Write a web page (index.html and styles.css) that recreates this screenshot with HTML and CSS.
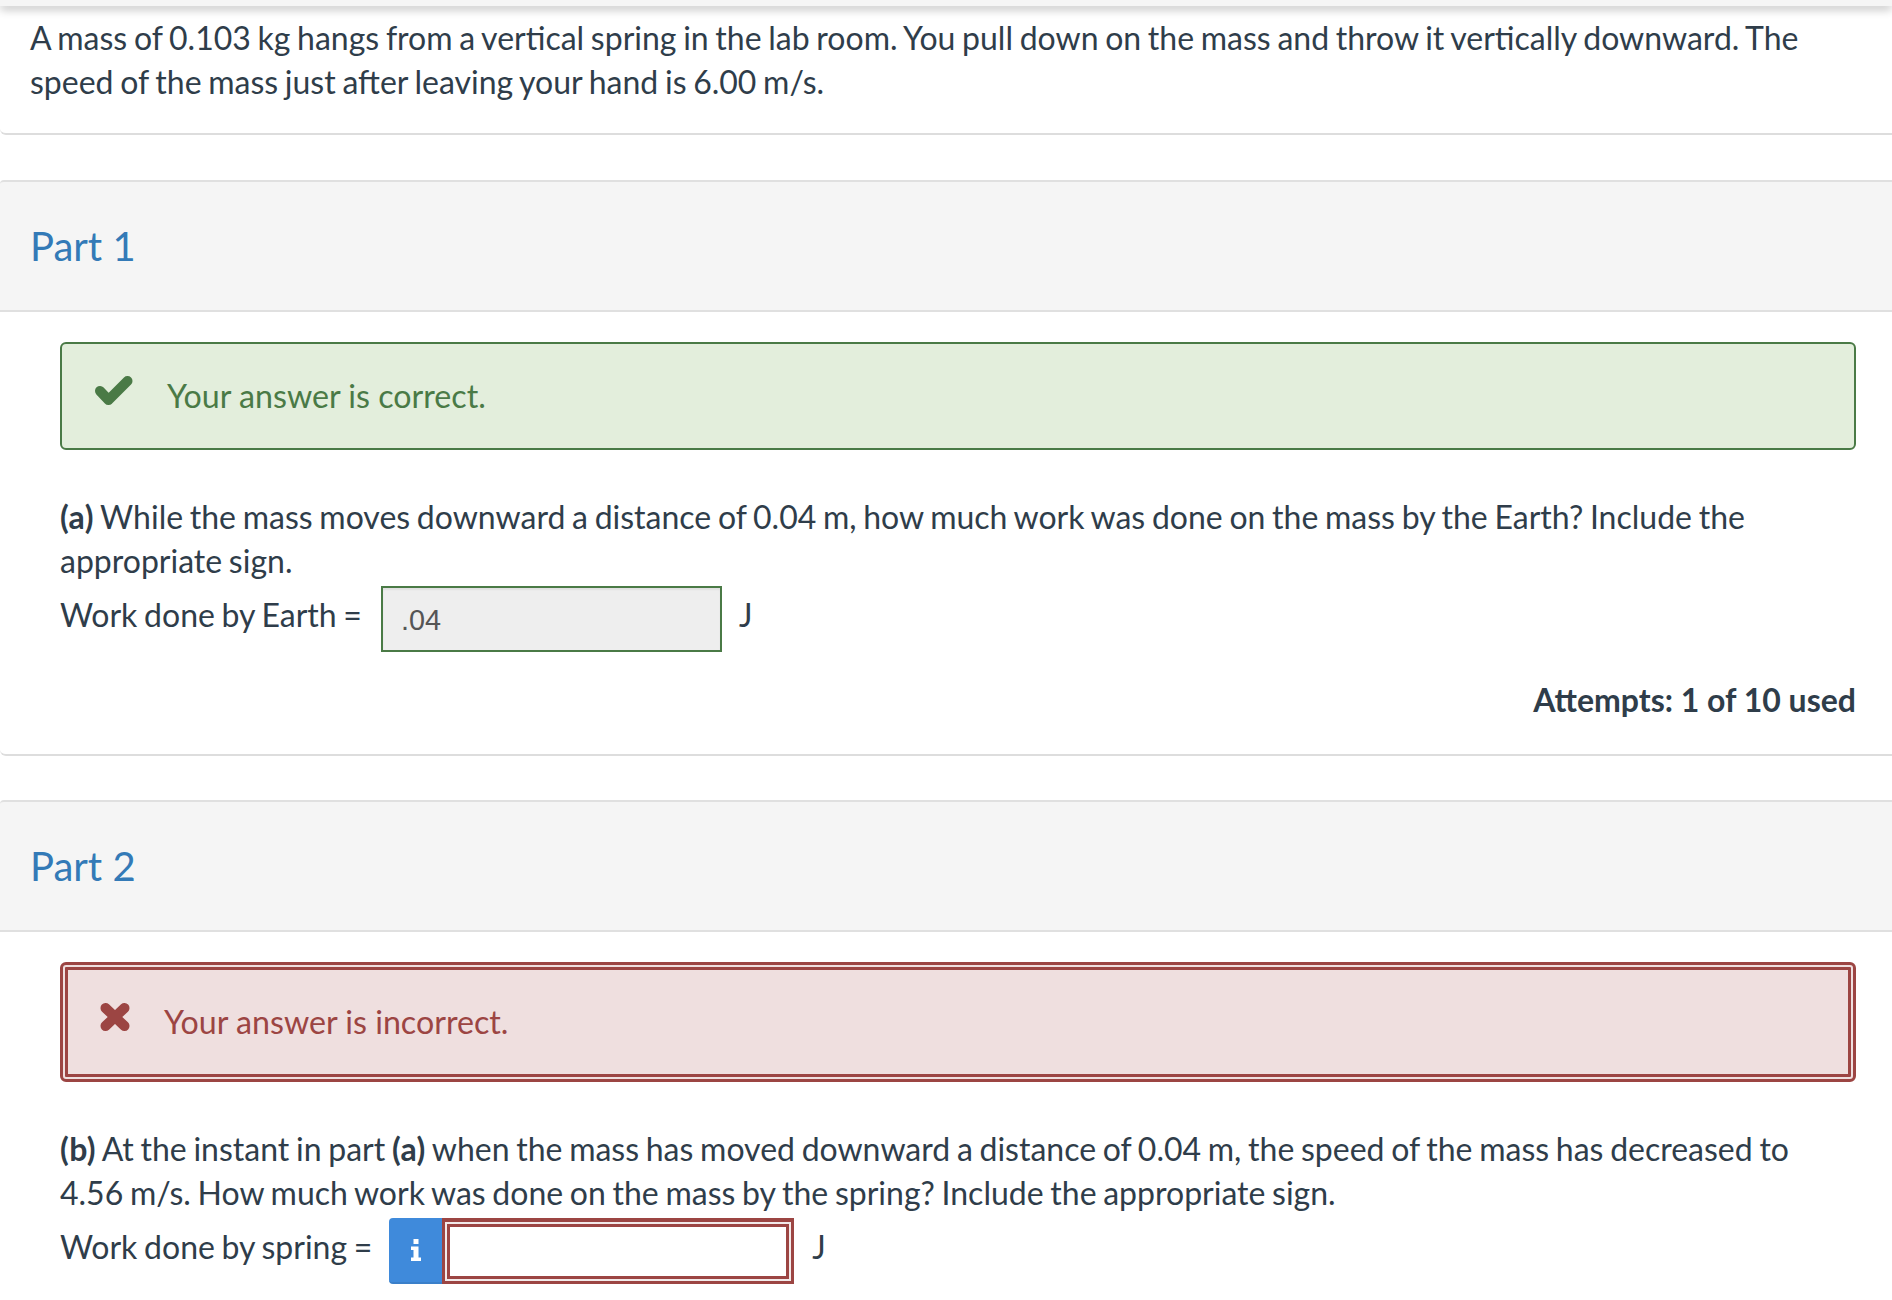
FILE: index.html
```html
<!DOCTYPE html>
<html lang="en">
<head>
<meta charset="utf-8">
<title>Spring work problem</title>
<link rel="stylesheet" href="styles.css">
</head>
<body>
<div class="topbar"></div>
<section class="card intro">
  <p class="line">A mass of 0.103 kg hangs from a vertical spring in the lab room. You pull down on the mass and throw it vertically downward. The speed of the mass just after leaving your hand is 6.00 m/s.</p>
</section>
<section class="card part">
  <h2 class="part-head">Part 1</h2>
  <div class="part-body">
    <div class="alert ok">
      <svg class="icon-check" viewBox="0 0 38 30"><polyline points="5,15 13.5,24 32.5,5"/></svg>
      <span class="alert-text">Your answer is correct.</span>
    </div>
    <p class="line question"><b>(a)</b> While the mass moves downward a distance of 0.04 m, how much work was done on the mass by the Earth? Include the appropriate sign.</p>
    <div class="answer">
      <span class="label">Work done by Earth =</span>
      <div class="field done">.04</div>
      <span class="unit">J</span>
    </div>
    <div class="attempts">Attempts: 1 of 10 used</div>
  </div>
</section>
<section class="part part-two">
  <h2 class="part-head">Part 2</h2>
  <div class="part-body">
    <div class="alert bad">
      <svg class="icon-times" viewBox="0 0 30 28"><path d="M5.5 5 24.5 23M24.5 5 5.5 23"/></svg>
      <span class="alert-text">Your answer is incorrect.</span>
    </div>
    <p class="line question"><b>(b)</b> At the instant in part <b>(a)</b> when the mass has moved downward a distance of 0.04 m, the speed of the mass has decreased to 4.56 m/s. How much work was done on the mass by the spring? Include the appropriate sign.</p>
    <div class="answer answer-b">
      <span class="label">Work done by spring =</span>
      <div class="info"><svg class="icon-info" viewBox="0 0 10 22"><path d="M2.5 0h5v5h-5zM0 7.5h7.5v11H10V22H0v-3.5h2.5V11H0z"/></svg></div>
      <div class="field wrong"></div>
      <span class="unit">J</span>
    </div>
  </div>
</section>
</body>
</html>
```
FILE: styles.css
```css
* { box-sizing: border-box; }
html, body { margin: 0; height: 1300px; overflow: hidden; }
body { background: #fff; color: #2f3d4a; font-family: Lato, "Liberation Sans", sans-serif; font-size: 32px; line-height: 44px; word-spacing: -1.5px; }
p { margin: 0; }
b { letter-spacing: .4px; }
.topbar { height: 6px; background: #f5f5f5; box-shadow: 0 3px 10px rgba(0,0,0,.3); position: relative; }
.card { border-radius: 0 0 0 6px; }
.intro { height: 129px; padding: 10px 60px 0 30px; border-bottom: 2px solid #ddd; }
.part-head { margin: 0; height: 132px; padding-left: 30px; background: #f5f5f5; border-top: 2px solid #e0e0e0; border-bottom: 2px solid #e0e0e0; border-radius: 4px 0 0 0; color: #337ab7; font-size: 40px; font-weight: 400; line-height: 128px; word-spacing: 0; }
.part { margin-top: 45px; }
.part:not(.part-two) { height: 576px; border-bottom: 2px solid #ddd; }
.part-two { margin-top: 44px; }
.part-body { padding: 30px 36px 0 60px; }
.alert { display: flex; align-items: flex-start; height: 108px; border: 2px solid #4a7a46; border-radius: 6px; background: #e3eedc; color: #4a7a46; font-size: 32.2px; word-spacing: 0; }
.alert-text { line-height: 107px; height: 100%; }
.ok .alert-text { margin-left: 34px; margin-top: -2px; }
.icon-check { width: 38px; height: 30px; margin: 32px 0 0 33px; fill: none; stroke: #4a7a46; stroke-width: 10; stroke-linecap: round; stroke-linejoin: round; }
.bad { height: 120px; border: 8px double #9c4543; background: #efdfdf; color: #9c4543; }
.bad .alert-text { margin-left: 34px; line-height: 104px; }
.icon-times { width: 30px; height: 28px; margin: 33px 0 0 32px; fill: none; stroke: #9c4543; stroke-width: 10; stroke-linecap: round; }
.question { margin-top: 45px; }
.answer { display: flex; align-items: flex-start; margin-top: 3px; height: 66px; }
.answer-b { margin-top: 3px; }
.label { margin-top: 7px; }
.unit { margin: 7px 0 0 17px; }
.field { width: 341px; height: 66px; margin-left: 19px; }
.done { border: 2px solid #4a7a46; background: #eee; box-shadow: inset 0 2px 2px rgba(0,0,0,.06); color: #555; font-family: "Liberation Sans", sans-serif; font-size: 28.8px; line-height: 65px; padding-left: 18px; }
.info { display: flex; align-items: center; justify-content: center; width: 53px; height: 66px; margin-left: 17px; background: #3f8adb; border-radius: 4px 0 0 4px; border-bottom: 2px solid #3a7fc9; }
.icon-info { width: 10px; height: 22px; fill: #fff; }
.wrong { width: 352px; margin-left: 0; border: 3px solid #9c4543; border-top-width: 4px; background: #fff; box-shadow: inset 0 0 0 2px #f2eaea, inset 0 0 0 5px #9c4543; }
.wrong + .unit { margin-left: 18px; }
.attempts { margin-top: 26px; text-align: right; font-weight: 700; font-size: 32px; word-spacing: 0; }
```
